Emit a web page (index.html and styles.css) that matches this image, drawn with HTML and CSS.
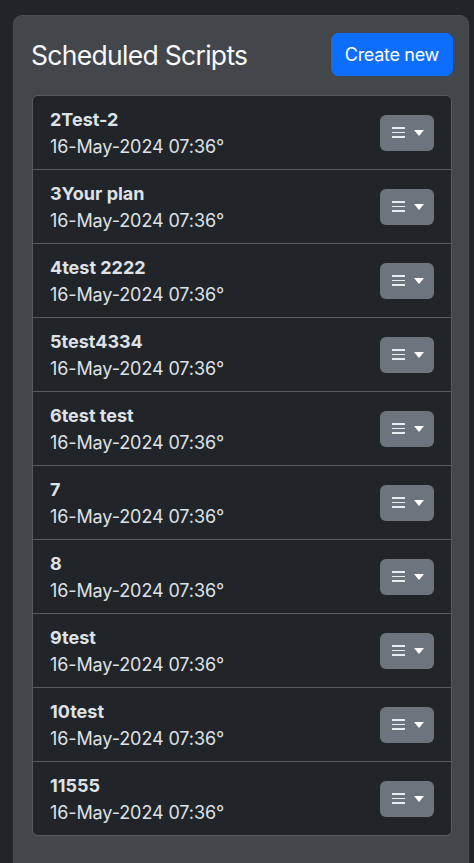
FILE: index.html
```html
<!DOCTYPE html>
<html lang="en">
<head>
<meta charset="utf-8">
<title>Scheduled Scripts</title>
<link rel="stylesheet" href="styles.css">
</head>
<body>
<div class="card">
  <div class="card-header">
    <h4 class="title">Scheduled Scripts</h4>
    <button class="btn-primary">Create new</button>
  </div>
  <ul class="list">
    <li class="item"><div class="info"><div class="name">2Test-2</div><div class="date">16-May-2024 07:36°</div></div><button class="menu-btn"><span class="burger"><i></i><i></i><i></i></span><span class="caret"></span></button></li>
    <li class="item"><div class="info"><div class="name">3Your plan</div><div class="date">16-May-2024 07:36°</div></div><button class="menu-btn"><span class="burger"><i></i><i></i><i></i></span><span class="caret"></span></button></li>
    <li class="item"><div class="info"><div class="name">4test 2222</div><div class="date">16-May-2024 07:36°</div></div><button class="menu-btn"><span class="burger"><i></i><i></i><i></i></span><span class="caret"></span></button></li>
    <li class="item"><div class="info"><div class="name">5test4334</div><div class="date">16-May-2024 07:36°</div></div><button class="menu-btn"><span class="burger"><i></i><i></i><i></i></span><span class="caret"></span></button></li>
    <li class="item"><div class="info"><div class="name">6test test</div><div class="date">16-May-2024 07:36°</div></div><button class="menu-btn"><span class="burger"><i></i><i></i><i></i></span><span class="caret"></span></button></li>
    <li class="item"><div class="info"><div class="name">7</div><div class="date">16-May-2024 07:36°</div></div><button class="menu-btn"><span class="burger"><i></i><i></i><i></i></span><span class="caret"></span></button></li>
    <li class="item"><div class="info"><div class="name">8</div><div class="date">16-May-2024 07:36°</div></div><button class="menu-btn"><span class="burger"><i></i><i></i><i></i></span><span class="caret"></span></button></li>
    <li class="item"><div class="info"><div class="name">9test</div><div class="date">16-May-2024 07:36°</div></div><button class="menu-btn"><span class="burger"><i></i><i></i><i></i></span><span class="caret"></span></button></li>
    <li class="item"><div class="info"><div class="name">10test</div><div class="date">16-May-2024 07:36°</div></div><button class="menu-btn"><span class="burger"><i></i><i></i><i></i></span><span class="caret"></span></button></li>
    <li class="item"><div class="info"><div class="name">11555</div><div class="date">16-May-2024 07:36°</div></div><button class="menu-btn"><span class="burger"><i></i><i></i><i></i></span><span class="caret"></span></button></li>
  </ul>
</div>
</body>
</html>
```
FILE: styles.css
```css
html, body {
  height: 100%;
}
body {
  margin: 0;
  padding: 15px 5px 0 13px;
  box-sizing: border-box;
  display: flex;
  flex-direction: column;
  background: #212529;
  font-family: "Inter", "Liberation Sans", sans-serif;
  font-size: 18px;
  line-height: 1.5;
  color: #dee2e6;
  overflow: hidden;
}
.card {
  flex: 1;
  background: #43474b;
  border: 1px solid #4a4e52;
  border-bottom: none;
  border-radius: 9px 9px 0 0;
  padding: 17px 16px 18px 18px;
}
.card-header {
  display: flex;
  align-items: center;
  justify-content: space-between;
  margin-bottom: 19px;
}
.title {
  margin: 2px 0 0 -1px;
  font-size: 26.5px;
  font-weight: 400;
  line-height: 1.2;
  color: #f8f9fa;
  letter-spacing: -0.7px;
}
.btn-primary {
  background: #0d6efd;
  color: #fff;
  border: 1px solid #0d6efd;
  border-radius: 7px;
  font-family: inherit;
  font-size: 18px;
  line-height: 27px;
  letter-spacing: -0.3px;
  padding: 7px 13px;
  height: 43px;
  margin-right: -1px;
}
.list {
  list-style: none;
  margin: 0;
  padding: 0;
  border: 1px solid #565a5e;
  border-radius: 6px;
  overflow: hidden;
}
.item {
  display: flex;
  align-items: center;
  justify-content: space-between;
  background: #212529;
  padding: 9px 17px 9px 17px;
  height: 74px;
  box-sizing: border-box;
  border-top: 1px solid #565a5e;
}
.item:first-child {
  border-top: none;
  height: 73px;
}
.name {
  font-weight: 700;
  line-height: 27px;
}
.date {
  line-height: 27px;
  letter-spacing: -0.1px;
}
.menu-btn {
  display: flex;
  align-items: center;
  justify-content: center;
  gap: 9px;
  width: 54px;
  height: 36px;
  background: #6c757d;
  border: none;
  border-radius: 6px;
  padding: 0 0 0 1px;
}
.burger {
  display: flex;
  flex-direction: column;
  gap: 3px;
  width: 13px;
}
.burger i {
  display: block;
  height: 1.5px;
  background: #e9ecef;
}
.caret {
  width: 0;
  height: 0;
  border-left: 5px solid transparent;
  border-right: 5px solid transparent;
  border-top: 6px solid #fff;
}
```
